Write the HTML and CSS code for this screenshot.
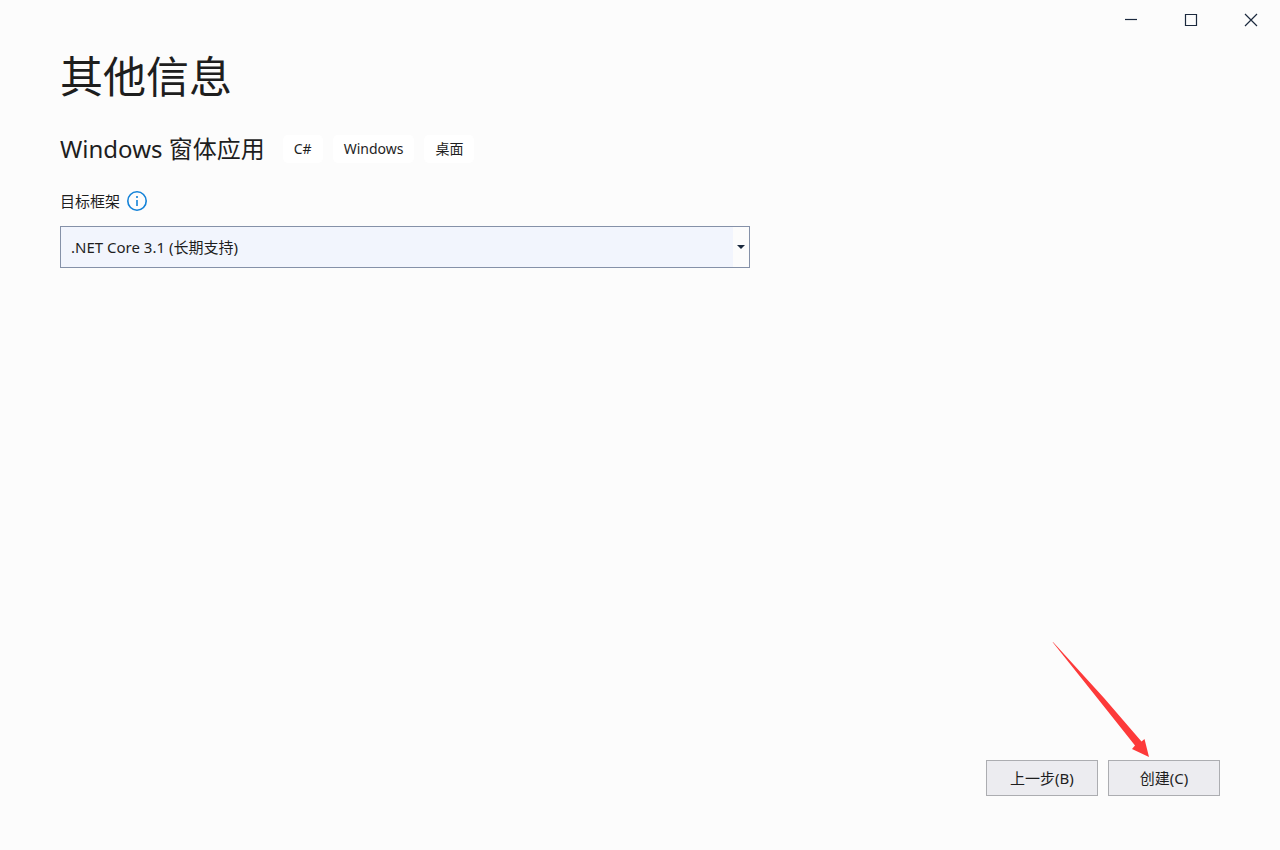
FILE: index.html
```html
<!DOCTYPE html>
<html lang="zh-CN">
<head>
    <meta charset="UTF-8">
    <meta name="viewport" content="width=device-width, initial-scale=1.0">
    <title>其他信息</title>
    <link rel="stylesheet" href="styles.css">
</head>
<body>
    <header class="titlebar">
        <button type="button" class="window-btn" aria-label="最小化">
            <svg width="14" height="14" viewBox="0 0 14 14"><path d="M1 6.5h12"/></svg>
        </button>
        <button type="button" class="window-btn" aria-label="最大化">
            <svg width="14" height="14" viewBox="0 0 14 14"><path d="M1.5 1.5h11v11h-11z"/></svg>
        </button>
        <button type="button" class="window-btn" aria-label="关闭">
            <svg width="14" height="14" viewBox="0 0 14 14"><path d="M1 1l12 12M13 1L1 13"/></svg>
        </button>
    </header>

    <main class="content">
        <h1>其他信息</h1>

        <div class="project">
            <h2>Windows 窗体应用</h2>
            <ul class="tags">
                <li class="tag">C#</li>
                <li class="tag">Windows</li>
                <li class="tag">桌面</li>
            </ul>
        </div>

        <div class="field-label">
            <label for="framework">目标框架</label>
            <svg class="info-icon" width="20" height="20" viewBox="0 0 20 20">
                <circle cx="10" cy="10" r="9.2"/>
                <path d="M10 5v2M10 9v6"/>
            </svg>
        </div>
        <div class="select-box">
            <select id="framework">
                <option>.NET Core 3.1 (长期支持)</option>
            </select>
            <span class="select-arrow">
                <svg width="8" height="4" viewBox="0 0 8 4"><path d="M0 0h8L4 4z"/></svg>
            </span>
        </div>
    </main>

    <footer class="actions">
        <button type="button" class="btn">上一步(B)</button>
        <div class="create">
            <button type="button" class="btn">创建(C)</button>
            <svg class="pointer" width="98" height="116" viewBox="0 0 98 116">
                <path d="M0.5 0L1.5 0.5L52 56L89.5 99.5L92.5 97L97 115L80 107L83 103.5L46 57Z"/>
            </svg>
        </div>
    </footer>
</body>
</html>
```
FILE: styles.css
```css
:root {
    --bg-color: #fcfcfc;
    --text-color: #1e1e1e;
    --icon-color: #1b293e;
    --border-color: #8591a8;
    --info-color: #1382d8;
}

* {
    margin: 0;
    padding: 0;
    box-sizing: border-box;
}

body {
    display: flex;
    flex-direction: column;
    min-height: 100vh;
    background-color: var(--bg-color);
    color: var(--text-color);
    font-family: "Noto Sans", "Noto Sans CJK SC", sans-serif;
    font-size: 15px;
    line-height: 20px;
}

button,
select {
    font: inherit;
    color: inherit;
}

/* Title bar */
.titlebar {
    display: flex;
    justify-content: flex-end;
}

.window-btn {
    display: flex;
    align-items: center;
    justify-content: center;
    width: 60px;
    height: 40px;
    padding-left: 2px;
    border: none;
    background: none;
}

.window-btn svg {
    fill: none;
    stroke: var(--icon-color);
    stroke-width: 1.2;
}

/* Content */
.content {
    flex: 1;
    padding: 5px 60px 0;
}

h1 {
    font-size: 43px;
    font-weight: 400;
    line-height: 64px;
}

.project {
    display: flex;
    align-items: center;
    gap: 18px;
    margin-top: 23px;
}

h2 {
    font-size: 24px;
    font-weight: 400;
    line-height: 34px;
}

.tags {
    display: flex;
    gap: 10px;
    list-style: none;
}

.tag {
    padding: 4px 11px;
    border-radius: 5px;
    background-color: #fff;
    font-size: 14px;
}

.field-label {
    display: flex;
    align-items: center;
    gap: 7px;
    margin-top: 25px;
}

.info-icon {
    fill: none;
    stroke: var(--info-color);
    stroke-width: 1.6;
}

.select-box {
    display: flex;
    position: relative;
    max-width: 690px;
    margin-top: 15px;
}

.select-box select {
    flex: 1;
    height: 42px;
    padding: 0 26px 0 10px;
    border: 1px solid var(--border-color);
    border-radius: 0;
    background-color: #f2f5fd;
    appearance: none;
}

.select-arrow {
    display: flex;
    align-items: center;
    justify-content: center;
    position: absolute;
    top: 1px;
    right: 1px;
    bottom: 1px;
    width: 16px;
    background-color: var(--bg-color);
    pointer-events: none;
}

.select-arrow svg {
    fill: var(--icon-color);
}

/* Footer */
.actions {
    display: flex;
    justify-content: flex-end;
    gap: 10px;
    padding: 0 60px 54px;
}

.btn {
    width: 112px;
    height: 36px;
    border: 1px solid #acadb1;
    background-color: #ececf0;
}

.create {
    position: relative;
}

.pointer {
    position: absolute;
    right: 70px;
    bottom: 38px;
    fill: #fd3a3a;
    pointer-events: none;
}
```
